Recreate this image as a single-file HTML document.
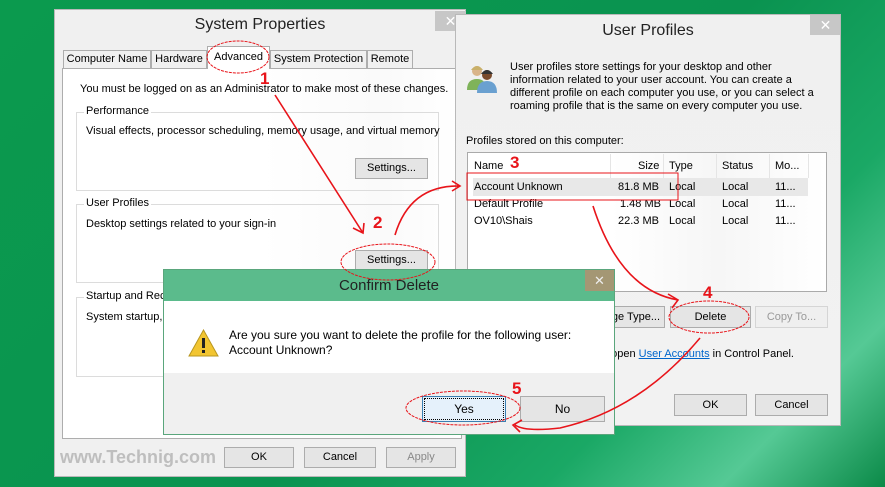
<!DOCTYPE html>
<html><head><meta charset="utf-8"><style>
*{margin:0;padding:0;box-sizing:border-box}
body{width:885px;height:487px;overflow:hidden;position:relative;font-family:"Liberation Sans",sans-serif;font-size:11px;color:#000;
background:linear-gradient(135deg,#0b9a4e 0%,#0a9350 55%,#1aa865 75%,#55c995 88%,#0b8a48 100%)}
.a{position:absolute}
.win{position:absolute;background:#f0f0f0;border:1px solid #b9b9b9}
.btn{position:absolute;background:#e5e5e5;border:1px solid #acacac;text-align:center;line-height:18px;font-size:11px;white-space:nowrap;overflow:hidden}
.t{position:absolute;white-space:nowrap}
.grp{position:absolute;border:1px solid #dcdcdc}
.lbl{position:absolute;background:#fff;padding:0 2px;top:-8px;left:7px;white-space:nowrap}
.tab{position:absolute;top:50px;height:19px;border:1px solid #adadad;background:#f0f0f0;text-align:center;line-height:17px;white-space:nowrap;overflow:hidden}
</style></head><body>

<!-- System Properties -->
<div class="win" style="left:54px;top:9px;width:412px;height:468px">
 <div class="t" style="left:0;width:410px;top:6px;text-align:center;font-size:16px;color:#222">System Properties</div>
 <div class="a" style="left:380px;top:1px;width:31px;height:20px;background:#c7c7c7;color:#fff;text-align:center;font-size:14px;line-height:20px">✕</div>
</div>
<div class="a" style="left:62px;top:68px;width:400px;height:371px;background:linear-gradient(90deg,#fff 50%,#fafafa 80%,#fff);border:1px solid #adadad"></div>
<div class="tab" style="left:63px;width:88px">Computer Name</div>
<div class="tab" style="left:151px;width:56px">Hardware</div>
<div class="tab" style="left:207px;width:63px;top:46px;height:23px;background:#fff;border-bottom:none;line-height:20px">Advanced</div>
<div class="tab" style="left:270px;width:97px">System Protection</div>
<div class="tab" style="left:367px;width:46px">Remote</div>
<div class="t" style="left:80px;top:83px">You must be logged on as an Administrator to make most of these changes.</div>
<div class="grp" style="left:76px;top:112px;width:363px;height:79px"><span class="lbl">Performance</span>
 <div class="t" style="left:9px;top:12px">Visual effects, processor scheduling, memory usage, and virtual memory</div></div>
<div class="btn" style="left:355px;top:158px;width:73px;height:21px">Settings...</div>
<div class="grp" style="left:76px;top:204px;width:363px;height:79px"><span class="lbl">User Profiles</span>
 <div class="t" style="left:9px;top:13px">Desktop settings related to your sign-in</div></div>
<div class="btn" style="left:355px;top:250px;width:73px;height:21px">Settings...</div>
<div class="grp" style="left:76px;top:297px;width:363px;height:80px"><span class="lbl">Startup and Recovery</span>
 <div class="t" style="left:9px;top:13px">System startup, system failure</div></div>
<div class="btn" style="left:224px;top:447px;width:70px;height:21px;line-height:19px">OK</div>
<div class="btn" style="left:304px;top:447px;width:72px;height:21px;line-height:19px">Cancel</div>
<div class="btn" style="left:386px;top:447px;width:70px;height:21px;line-height:19px;color:#888">Apply</div>
<div class="t" style="left:60px;top:447px;font-size:18px;font-weight:bold;color:rgba(150,150,150,.55)">www.Technig.com</div>

<!-- User Profiles -->
<div class="win" style="left:455px;top:14px;width:386px;height:412px;background:linear-gradient(#f0f0f0,#f2f2f2);overflow:hidden">
 <div class="t" style="left:0;width:384px;top:7px;text-align:center;font-size:16px;color:#222">User Profiles</div>
 <div class="a" style="left:354px;top:0;width:31px;height:20px;background:#c7c7c7;color:#fff;text-align:center;font-size:14px;line-height:20px">✕</div>
 <div class="t" style="left:9px;top:333px">To create new user accounts, open <span style="color:#0066cc;text-decoration:underline">User Accounts</span> in Control Panel.</div>
</div>
<svg class="a" style="left:466px;top:62px" width="32" height="32" viewBox="0 0 32 32">
 <circle cx="11" cy="9" r="5" fill="#d9b48a"/><path d="M5 8q6-8 12 0" fill="#c9b06a"/>
 <path d="M1 28q0-11 10-11q8 0 9 8v3z" fill="#7fb35a"/>
 <circle cx="21" cy="13" r="5" fill="#7a4b2c"/><path d="M15 12q6-8 12 0" fill="#333"/>
 <path d="M11 31q0-12 10-12q10 0 10 12z" fill="#6aa0d0"/>
</svg>
<div class="t" style="left:510px;top:61px;line-height:13px">User profiles store settings for your desktop and other<br>information related to your user account. You can create a<br>different profile on each computer you use, or you can select a<br>roaming profile that is the same on every computer you use.</div>
<div class="t" style="left:466px;top:135px">Profiles stored on this computer:</div>
<div class="a" style="left:467px;top:152px;width:360px;height:140px;background:linear-gradient(90deg,#fff 40%,#f6f6f6 70%,#fff);border:1px solid #aaa"></div>
<div class="a" style="left:610px;top:154px;width:1px;height:24px;background:#e5e5e5"></div>
<div class="a" style="left:663px;top:154px;width:1px;height:24px;background:#e5e5e5"></div>
<div class="a" style="left:716px;top:154px;width:1px;height:24px;background:#e5e5e5"></div>
<div class="a" style="left:769px;top:154px;width:1px;height:24px;background:#e5e5e5"></div>
<div class="a" style="left:808px;top:154px;width:1px;height:24px;background:#e5e5e5"></div>
<div class="a" style="left:473px;top:178px;width:335px;height:18px;background:#e8e8e8"></div>
<div class="t" style="left:474px;top:160px">Name</div><div class="t" style="left:638px;top:160px">Size</div><div class="t" style="left:669px;top:160px">Type</div><div class="t" style="left:722px;top:160px">Status</div><div class="t" style="left:775px;top:160px">Mo...</div>
<div class="t" style="left:474px;top:181px">Account Unknown</div><div class="t" style="left:618px;top:181px">81.8 MB</div><div class="t" style="left:669px;top:181px">Local</div><div class="t" style="left:722px;top:181px">Local</div><div class="t" style="left:775px;top:181px">11...</div>
<div class="t" style="left:474px;top:198px">Default Profile</div><div class="t" style="left:620px;top:198px">1.48 MB</div><div class="t" style="left:669px;top:198px">Local</div><div class="t" style="left:722px;top:198px">Local</div><div class="t" style="left:775px;top:198px">11...</div>
<div class="t" style="left:474px;top:215px">OV10\Shais</div><div class="t" style="left:618px;top:215px">22.3 MB</div><div class="t" style="left:669px;top:215px">Local</div><div class="t" style="left:722px;top:215px">Local</div><div class="t" style="left:775px;top:215px">11...</div>
<div class="btn" style="left:580px;top:306px;width:85px;height:22px;line-height:20px;text-align:right;padding-right:4px">Change Type...</div>
<div class="btn" style="left:670px;top:306px;width:81px;height:22px;line-height:20px">Delete</div>
<div class="btn" style="left:755px;top:306px;width:73px;height:22px;line-height:20px;color:#999;background:#efefef;border-color:#d5d5d5">Copy To...</div>
<div class="btn" style="left:674px;top:394px;width:73px;height:22px;line-height:20px">OK</div>
<div class="btn" style="left:755px;top:394px;width:73px;height:22px;line-height:20px">Cancel</div>

<!-- Confirm Delete -->
<div class="a" style="left:163px;top:269px;width:452px;height:166px;background:#f0f0f0;border:1px solid #5aa67c">
 <div class="a" style="left:0;top:0;width:450px;height:31px;background:#5bbb8c"></div>
 <div class="t" style="left:0;width:450px;top:7px;text-align:center;font-size:15px;color:#222">Confirm Delete</div>
 <div class="a" style="left:421px;top:0;width:29px;height:21px;background:#a49774;color:#eee;text-align:center;line-height:21px;font-size:13px">✕</div>
 <div class="a" style="left:0;top:31px;width:450px;height:72px;background:#fff"></div>
</div>
<svg class="a" style="left:188px;top:329px" width="31" height="28" viewBox="0 0 31 28">
 <path d="M15.5 1L30 27H1z" fill="#f2c531" stroke="#b9971f"/><rect x="14" y="9" width="3" height="10" fill="#222"/><rect x="14" y="21" width="3" height="3" fill="#222"/></svg>
<div class="t" style="left:229px;top:328px;line-height:15px;font-size:12px">Are you sure you want to delete the profile for the following user:<br>Account Unknown?</div>
<div class="btn" style="left:422px;top:396px;width:84px;height:26px;line-height:24px;border:1px solid #3c7fb1;outline:1px dotted #000;outline-offset:-3px;background:#e5f1fb;font-size:12px">Yes</div>
<div class="btn" style="left:520px;top:396px;width:85px;height:26px;line-height:24px;font-size:12px">No</div>

<!-- annotations -->
<svg class="a" style="left:0;top:0" width="885" height="487" viewBox="0 0 885 487" fill="none" stroke="#e8141a" stroke-width="1.6">
 <ellipse cx="238" cy="57" rx="31" ry="16" stroke-width="1" stroke-dasharray="3 1"/>
 <ellipse cx="388" cy="262" rx="47" ry="18" stroke-width="1" stroke-dasharray="3 1"/>
 <ellipse cx="709" cy="317" rx="40" ry="16" stroke-width="1" stroke-dasharray="3 1"/>
 <ellipse cx="463" cy="408" rx="57" ry="17" stroke-width="1" stroke-dasharray="3 1"/>
 <rect x="467" y="173" width="211" height="27" stroke-width="1"/>
 <path d="M275 95L363 233M353 228L363 233L364 223"/>
 <path d="M395 235Q410 185 460 186M452 181L460 186L452 191"/>
 <path d="M593 206Q620 290 678 300M668 294L678 300L672 308"/>
 <path d="M700 338Q640 410 560 428Q525 432 515 425M522 420L513 425L520 432"/>
 <g fill="#e8141a" stroke="none" font-family="Liberation Sans" font-weight="bold" font-size="17"><text x="260" y="84">1</text><text x="373" y="228">2</text><text x="510" y="168">3</text><text x="703" y="298">4</text><text x="512" y="394">5</text></g>
</svg>
</body></html>
